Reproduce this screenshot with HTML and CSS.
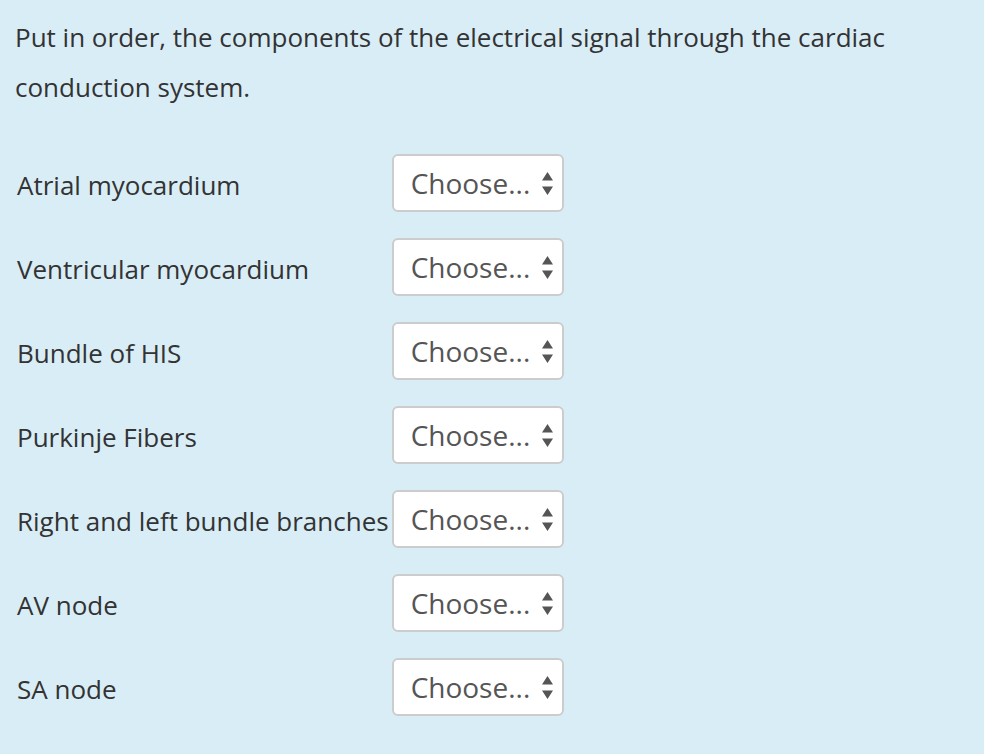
FILE: index.html
```html
<!DOCTYPE html>
<html>
<head>
<meta charset="utf-8">
<link rel="stylesheet" href="styles.css">
</head>
<body>
<div class="question">
  <p class="qtext">Put in order, the components of the electrical signal through the cardiac conduction system.</p>
  <div class="answers">
    <div class="label">Atrial myocardium</div>
    <div class="control"><div class="select"><span>Choose...</span><svg class="arrows" width="11" height="23" viewBox="0 0 11 23"><path d="M5.5 0 L11 8.5 H0 Z M5.5 23 L11 14.5 H0 Z" fill="#555"/></svg></div></div>
    <div class="label">Ventricular myocardium</div>
    <div class="control"><div class="select"><span>Choose...</span><svg class="arrows" width="11" height="23" viewBox="0 0 11 23"><path d="M5.5 0 L11 8.5 H0 Z M5.5 23 L11 14.5 H0 Z" fill="#555"/></svg></div></div>
    <div class="label">Bundle of HIS</div>
    <div class="control"><div class="select"><span>Choose...</span><svg class="arrows" width="11" height="23" viewBox="0 0 11 23"><path d="M5.5 0 L11 8.5 H0 Z M5.5 23 L11 14.5 H0 Z" fill="#555"/></svg></div></div>
    <div class="label">Purkinje Fibers</div>
    <div class="control"><div class="select"><span>Choose...</span><svg class="arrows" width="11" height="23" viewBox="0 0 11 23"><path d="M5.5 0 L11 8.5 H0 Z M5.5 23 L11 14.5 H0 Z" fill="#555"/></svg></div></div>
    <div class="label">Right and left bundle branches</div>
    <div class="control"><div class="select"><span>Choose...</span><svg class="arrows" width="11" height="23" viewBox="0 0 11 23"><path d="M5.5 0 L11 8.5 H0 Z M5.5 23 L11 14.5 H0 Z" fill="#555"/></svg></div></div>
    <div class="label">AV node</div>
    <div class="control"><div class="select"><span>Choose...</span><svg class="arrows" width="11" height="23" viewBox="0 0 11 23"><path d="M5.5 0 L11 8.5 H0 Z M5.5 23 L11 14.5 H0 Z" fill="#555"/></svg></div></div>
    <div class="label">SA node</div>
    <div class="control"><div class="select"><span>Choose...</span><svg class="arrows" width="11" height="23" viewBox="0 0 11 23"><path d="M5.5 0 L11 8.5 H0 Z M5.5 23 L11 14.5 H0 Z" fill="#555"/></svg></div></div>
  </div>
</div>
</body>
</html>
```

FILE: styles.css
```css
html, body {
  margin: 0;
  padding: 0;
  background: #d9edf7;
}
body {
  font-family: "Open Sans", "DejaVu Sans", sans-serif;
  color: #333;
  width: 984px;
  height: 754px;
  overflow: hidden;
}
.question {
  padding: 12px 15px 0 15px;
}
.qtext {
  margin: 0;
  font-size: 26px;
  line-height: 50px;
  color: #333;
}
.answers {
  display: grid;
  grid-template-columns: max-content max-content;
  column-gap: 3px;
  row-gap: 26px;
  margin-top: 42px;
  padding-left: 2px;
  align-items: center;
}
.label {
  font-size: 26px;
  line-height: 36px;
  padding-top: 4px;
}
.select {
  box-sizing: border-box;
  width: 172px;
  height: 58px;
  background: #fff;
  border: 2px solid #ccc;
  border-radius: 6px;
  display: flex;
  align-items: center;
  justify-content: space-between;
  padding: 0 9px 0 17px;
  font-size: 28px;
  color: #555;
}
.select span {
  line-height: 38px;
}
.arrows {
  display: block;
  margin-top: 1px;
}
```
